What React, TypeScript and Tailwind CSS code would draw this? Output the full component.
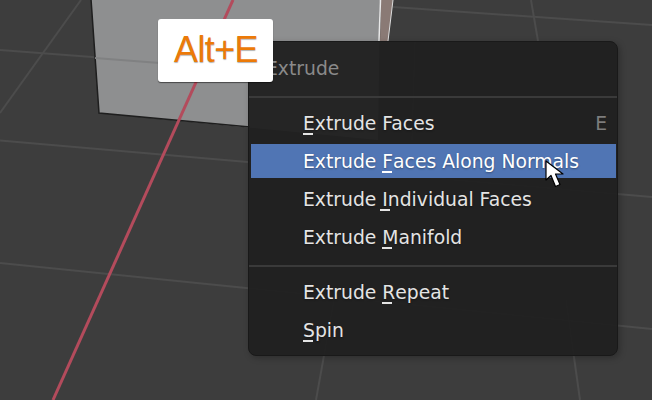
import React from "react";

type Item = { before: string; key_: string; after: string; hint?: string; active?: boolean; lineClass: string };

const first: Item[] = [
  { before: "", key_: "E", after: "xtrude Faces", hint: "E", lineClass: "left-0" },
  { before: "Extrude ", key_: "F", after: "aces Along Normals", active: true, lineClass: "left-0" },
  { before: "Extrude ", key_: "I", after: "ndividual Faces", lineClass: "left-[-2px]" },
  { before: "Extrude ", key_: "M", after: "anifold", lineClass: "left-0" },
];

const second: Item[] = [
  { before: "Extrude ", key_: "R", after: "epeat", lineClass: "left-0" },
  { before: "", key_: "S", after: "pin", lineClass: "left-0" },
];

function Viewport() {
  return (
    <svg className="absolute inset-0" width="652" height="400" viewBox="0 0 652 400" fill="none">
      {/* grid */}
      <g stroke="#4c4c4c" strokeWidth="2">
        <path d="M0 50L158 62" />
        <path d="M393 7L652 25" />
        <path d="M0 140.500L652 197" />
        <path d="M0 263L652 329" />
        <path d="M81 0L0 113" />
        <path d="M531 0L538 41" />
        <path d="M334 300L316 400" />
        <path d="M566 300L580 400" />
        <path d="M415 41L412 140" />
      </g>
      {/* cube */}
      <path d="M91 -1L380 -1L378 140L99 113Z" fill="#8e8f90" />
      <path d="M381 0L393 0L388 41L380 41Z" fill="#8a7a75" />
      <path d="M91 -1L99 113L250 127" stroke="#1e1e1e" strokeWidth="1.500" />
      <path d="M380.500 0L379 41" stroke="#e8e8e8" strokeWidth="1.500" />
      <path d="M393 0L388 41" stroke="#dddddd" strokeWidth="1" />
      <path d="M95 58L250 70" stroke="#808182" strokeWidth="2" />
      {/* x axis */}
      <path d="M233 0L53 400" stroke="#b34b5c" strokeWidth="3" />
    </svg>
  );
}

function MenuRow({ item }: { item: Item }) {
  return (
    <div
      className={`flex h-[34px] items-center justify-between pl-[52px] pr-[9px] pt-[2px] ${
        item.active ? "bg-[#5075b4] text-white" : "text-[#e4e4e4]"
      }`}
    >
      <span className="whitespace-pre [text-shadow:0_1px_2px_rgba(0,0,0,0.35)]">
        {item.before}
        <span className="relative">
          {item.key_}
          <span className={`absolute bottom-[-1px] h-[2px] w-[10px] bg-current ${item.lineClass}`} />
        </span>
        {item.after}
      </span>
      {item.hint && <span className="text-[#7d7d7d]">{item.hint}</span>}
    </div>
  );
}

export default function App() {
  return (
    <div className="relative h-[400px] w-[652px] overflow-hidden bg-[#3d3d3d] font-['DejaVu_Sans',sans-serif]">
      <Viewport />

      <div className="absolute left-[248px] top-[41px] flex h-[315px] w-[370px] flex-col rounded-[8px] border border-[#191919] bg-[#202020]/95 pl-[2px] pr-[1px] text-[18.750px] leading-none shadow-[2px_2px_6px_rgba(0,0,0,0.25)]">
        <div className="flex h-[54px] shrink-0 items-center pl-[15px] text-[#8a8a8a]">Extrude</div>
        <div className="-ml-[2px] -mr-[1px] h-[2px] shrink-0 bg-[#3a3a3a]" />
        <div className="flex flex-col gap-[4px] pt-[8px]">
          {first.map((item) => (
            <MenuRow key={item.key_} item={item} />
          ))}
        </div>
        <div className="-ml-[2px] -mr-[1px] mt-[11px] h-[2px] shrink-0 bg-[#3a3a3a]" />
        <div className="flex flex-col gap-[4px] pt-[8px]">
          {second.map((item) => (
            <MenuRow key={item.key_} item={item} />
          ))}
        </div>
      </div>

      <div className="absolute left-[158px] top-[19px] flex h-[63px] w-[115px] items-center justify-center rounded-[3px] bg-white pb-[2px] pl-[1px] font-['Liberation_Sans',sans-serif] text-[36px] tracking-[-0.6px] text-[#ec7a08] shadow-[0_1px_1px_rgba(0,0,0,0.5)] [text-shadow:0_1px_1px_rgba(0,0,0,0.3)]">
        Alt+E
      </div>

      {/* mouse pointer */}
      <svg className="absolute left-[540px] top-[155px]" width="32" height="38" viewBox="540 155 32 38">
        <path
          d="M546 161L546 180L551 175.500L555.500 186.500L560 184.500L555.500 174L563 174Z"
          fill="#ffffff"
          stroke="#000000"
          strokeWidth="1.200"
          strokeLinejoin="round"
        />
      </svg>
    </div>
  );
}
